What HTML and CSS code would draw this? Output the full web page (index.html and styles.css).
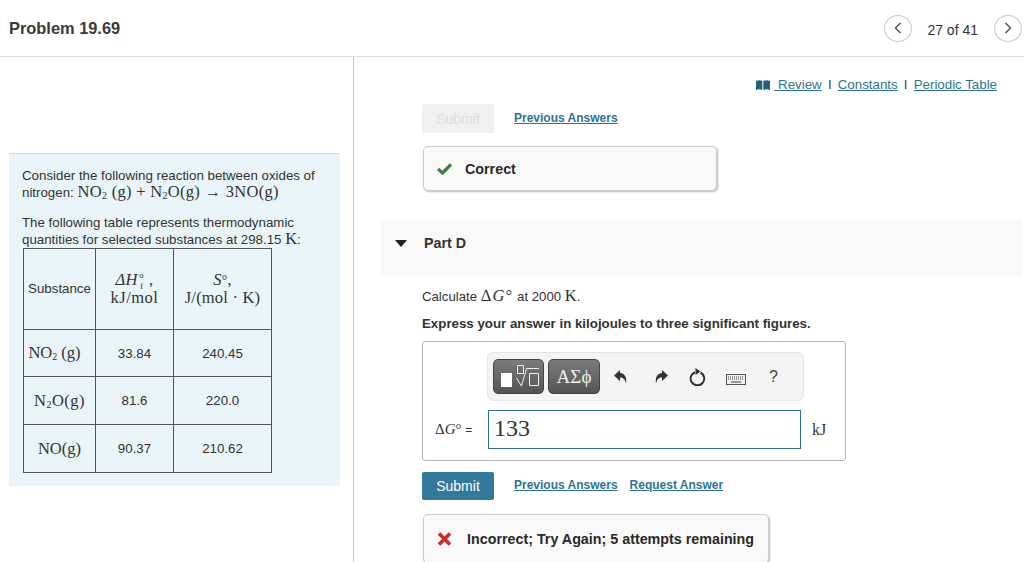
FILE: index.html
```html
<!DOCTYPE html>
<html lang="en">
<head>
<meta charset="utf-8">
<title>Problem 19.69</title>
<link rel="stylesheet" href="styles.css">
</head>
<body>
<header class="top">
  <h1 class="title">Problem 19.69</h1>
  <nav class="pager">
    <span class="circle"><svg width="12" height="14" viewBox="0 0 12 14"><path d="M8.500 2 3.500 7l5 5" fill="none" stroke="#555" stroke-width="1.500"/></svg></span>
    <span class="count">27 of 41</span>
    <span class="circle"><svg width="12" height="14" viewBox="0 0 12 14"><path d="M3.500 2l5 5-5 5" fill="none" stroke="#555" stroke-width="1.500"/></svg></span>
  </nav>
</header>
<div class="columns">
  <aside class="left">
    <section class="panel">
      <p class="intro">Consider the following reaction between oxides of<br>nitrogen: <span class="m m-l eqn">NO<sub>2</sub> (g) + N<sub>2</sub>O(g) → 3NO(g)</span></p>
      <p class="intro second">The following table represents thermodynamic<br>quantities for selected substances at 298.15 <span class="m m-l">K</span>:</p>
      <table class="data">
        <tr class="r-head">
          <td class="c1">Substance</td>
          <td class="c2"><span class="m wide"><i>ΔH</i><span class="supsub"><span>°</span><span class="low">f</span></span> ,<br>kJ/mol</span></td>
          <td class="c3"><span class="m slight"><i>S</i><span class="deg">°</span>,<br>J/(mol · K)</span></td>
        </tr>
        <tr class="r1"><td><span class="m off-left">NO<sub>2</sub> (g)</span></td><td>33.84</td><td>240.45</td></tr>
        <tr class="r2"><td><span class="m wide">N<sub>2</sub>O(g)</span></td><td>81.6</td><td>220.0</td></tr>
        <tr class="r3"><td><span class="m">NO(g)</span></td><td>90.37</td><td>210.62</td></tr>
      </table>
    </section>
  </aside>
  <main class="right">
    <div class="links">
      <svg class="book" width="14" height="10" viewBox="0 0 14 10"><path d="M0 1c2-1 4.500-1 6.300 0v9C4.500 9 2 9 0 10zM7.300 1c2-1 4.700-1 6.700 0v9c-2-1-4.700-1-6.700 0z" fill="#24607c"/></svg>
      <a href="#">&nbsp;Review</a><span class="sep">I</span><a href="#">Constants</a><span class="sep">I</span><a href="#">Periodic Table</a>
    </div>
    <div class="content">
      <div class="actions first">
        <button class="btn disabled" type="button">Submit</button>
        <a class="bold-link" href="#">Previous Answers</a>
      </div>
      <div class="feedback correct">
        <svg width="15" height="12" viewBox="0 0 15 12"><path d="M1 6 5.500 10 14 1.500" fill="none" stroke="#3a8142" stroke-width="3.200"/></svg>
        <span>Correct</span>
      </div>
    </div>
    <div class="part">
      <svg width="12" height="7" viewBox="0 0 12 7"><path d="M0 0h12L6 7z" fill="#222"/></svg>
      <span>Part D</span>
    </div>
    <div class="content">
      <p class="q">Calculate <span class="m m-l dg">Δ<i>G</i>°</span> at 2000 <span class="m m-l">K</span>.</p>
      <p class="q strong">Express your answer in kilojoules to three significant figures.</p>
      <div class="answer">
        <div class="toolbar">
          <span class="tool t1">
            <svg width="51" height="35" viewBox="0 0 51 35"><path d="M8 14h11v14H8z" fill="#fff"/><g fill="none" stroke="#eee" stroke-width="1"><path d="M24.500 6.500h6v8h-6zM36.500 14.500h9v12h-9z"/><path d="M23.500 19l5 8 5-17.500H46"/></g></svg>
          </span>
          <span class="tool greek">ΑΣϕ</span>
          <svg class="ic i1" width="16" height="16" viewBox="0 0 16 16"><path d="M7 1 1 6.500 7 12V8.500c3 0 5 1.500 6 6 1-6-1-10-6-10.500z" fill="#333"/></svg>
          <svg class="ic i2" width="16" height="16" viewBox="0 0 16 16"><path d="M9 1l6 5.500L9 12V8.500c-3 0-5 1.500-6 6-1-6 1-10 6-10.500z" fill="#333"/></svg>
          <svg class="ic i3" width="18" height="18" viewBox="0 0 18 18"><path d="M11.500 4.500A6.800 6.800 0 1 1 6 4.200" fill="none" stroke="#333" stroke-width="2"/><path d="M6.500 0l5 3.500-5 3.500z" fill="#333"/></svg>
          <svg class="ic i4" width="20" height="11" viewBox="0 0 20 11"><rect x=".5" y=".5" width="19" height="10" fill="#eee" stroke="#555"/><path d="M2 3h16M2 5h16" stroke="#444" stroke-dasharray="1 1"/><path d="M5 8h10" stroke="#444"/></svg>
          <span class="help">?</span>
        </div>
        <div class="entry">
          <span class="m lhs">Δ<i>G</i>° <span class="eq">=</span></span>
          <div class="input">133</div>
          <span class="m unit">kJ</span>
        </div>
      </div>
      <div class="actions second">
        <button class="btn" type="button">Submit</button>
        <a class="bold-link" href="#">Previous Answers</a>
        <a class="bold-link req" href="#">Request Answer</a>
      </div>
      <div class="feedback wrong">
        <svg width="15" height="14" viewBox="0 0 15 14"><path d="M2 1.500 13 12.500M13 1.500 2 12.500" fill="none" stroke="#cf2a2a" stroke-width="3.600"/></svg>
        <span>Incorrect; Try Again; 5 attempts remaining</span>
      </div>
    </div>
  </main>
</div>
</body>
</html>
```
FILE: styles.css
```css
* { box-sizing: border-box; }
html, body { margin: 0; height: 562px; overflow: hidden; background: #fff; }
body { font-family: "Liberation Sans", Arial, sans-serif; font-size: 13px; color: #333; }
p { margin: 0; }
a { color: #2d7396; }

.top { height: 57px; border-bottom: 1px solid #dedede; display: flex; justify-content: space-between; align-items: center; padding: 0 2px 0 9px; }
.title { margin: 1px 0 0; font-size: 16.400px; font-weight: 700; color: #3a3a3a; }
.pager { display: flex; align-items: center; margin-top: 2px; }
.circle { width: 28px; height: 27px; border: 1px solid #c8c8c8; border-radius: 50%; display: flex; align-items: center; justify-content: center; margin-top: -2px; }
.count { font-size: 14px; color: #333; margin: 1px 16px 0 15px; }

.columns { display: flex; height: 505px; }
.left { width: 354px; flex: none; border-right: 1px solid #c9c9c9; padding: 96px 13px 0 9px; }
.panel { height: 333px; background: #e9f5f8; border-top: 1px solid #dcdcdc; padding: 14px 14px 0 13px; }
.intro { font-size: 13.300px; line-height: 16px; color: #333; }
.second { margin-top: 14px; }
.m { font-family: "Liberation Serif", "Times New Roman", serif; }
.m-l { font-size: 16.500px; line-height: 16px; }
.eqn { letter-spacing: .3px; }
.dg { letter-spacing: 1.200px; }
.m sub { font-size: 10px; line-height: 0; vertical-align: -2px; }

.data { border-collapse: collapse; table-layout: fixed; width: 248px; margin: 0 0 0 1px; text-align: center; font-size: 13.300px; }
.data td { border: 1px solid #555; padding: 0; }
.data .m { font-size: 16.500px; line-height: 18px; display: inline-block; }
.data .wide { letter-spacing: .5px; }
.data .slight { letter-spacing: .2px; }
.data .off-left { margin-right: 10px; }
.c1 { width: 72px; }
.c2 { width: 78px; }
.c3 { width: 98px; }
.r-head { height: 81px; }
.r-head .c1 { padding-bottom: 2px; }
.r1 { height: 47px; }
.r2 { height: 48px; }
.r3 { height: 48px; }
.supsub { display: inline-flex; flex-direction: column; justify-content: center; height: 0; vertical-align: 3px; font-size: 12px; line-height: 8px; margin-left: 1px; }
.low { font-size: 9px; }
.deg { font-size: 14px; line-height: 0; }

.right { flex: 1; min-width: 0; padding: 0 2px 0 27px; }
.links { height: 37px; display: flex; align-items: flex-end; justify-content: flex-end; padding: 0 25px 0 0; font-size: 13.300px; line-height: 18px; }
.links .book { margin: 0 4px 4px 0; }
.links a { color: #2d7396; }
.sep { font-size: 13.300px; margin: 0 6.200px; color: #444; }

.content { padding-left: 41px; }
.actions { display: flex; align-items: center; }
.actions.first { margin-top: 10px; }
.actions.second { margin-top: 11px; }
.btn { width: 72px; height: 28px; border: 0; border-radius: 2px; background: #33799c; color: #fff; font: 14px "Liberation Sans", Arial, sans-serif; padding: 0; }
.btn.disabled { height: 29px; background: #f0f0f0; color: #ddd; }
.bold-link { margin: -2px 0 0 20px; font-size: 12px; font-weight: 700; }
.bold-link.req { margin-left: 12px; }
.feedback { display: flex; align-items: center; margin-left: 1px; background: #f9f9f9; border: 1px solid #ccc; border-radius: 5px; box-shadow: 1px 1px 2px #bbb; font-size: 14.300px; font-weight: 700; color: #2a2a2a; }
.correct { width: 294px; height: 45px; margin-top: 13px; padding-left: 13px; gap: 13px; }
.wrong { width: 346px; height: 50px; margin-top: 14px; padding-left: 13px; gap: 15px; }

.part { display: flex; align-items: center; height: 58px; margin-top: 28px; background: #f9f9f9; padding: 0 0 10px 14px; gap: 17px; font-size: 14.300px; font-weight: 700; color: #333; }
.q { font-size: 13.200px; line-height: 18px; }
.part + .content > .q:first-child { margin-top: 11px; }
.q.strong { font-weight: 700; font-size: 13.300px; margin-top: 9px; }
.answer { width: 424px; height: 120px; margin-top: 8px; border: 1px solid #b5b5b5; border-radius: 3px; padding: 10px 0 0 64px; }
.toolbar { width: 317px; height: 49px; background: #f4f4f4; border: 1px solid #e6e6e6; border-radius: 6px; display: flex; align-items: center; padding-left: 5px; }
.tool { flex: none; width: 52px; height: 35px; margin-right: 4px; border-radius: 5px; border: 1px solid #444; background: linear-gradient(#7b7b7b, #555); color: #eee; display: flex; align-items: center; justify-content: center; }
.t1 { width: 51px; }
.t1 svg { flex: none; margin: -1px; }
.greek { font-family: "Liberation Serif", serif; font-size: 19px; }
.ic { flex: none; }
.i1 { margin-left: 9px; }
.i2 { margin-left: 24px; }
.i3 { margin-left: 20px; }
.i4 { margin-left: 19px; margin-top: 6px; }
.help { font-size: 16px; margin-left: 23px; color: #444; }
.entry { display: flex; align-items: center; margin: 9px 0 0 -53px; height: 39px; }
.lhs { width: 54px; padding-left: 1px; font-size: 15px; white-space: nowrap; }
.eq { font-family: "Liberation Sans", sans-serif; font-size: 12px; }
.input { width: 313px; height: 39px; border: 1px solid #2d7396; background: #fff; font-family: "Liberation Serif", serif; font-size: 24px; line-height: 35px; padding-left: 5px; color: #333; }
.unit { font-size: 16px; margin-left: 11px; }
```
